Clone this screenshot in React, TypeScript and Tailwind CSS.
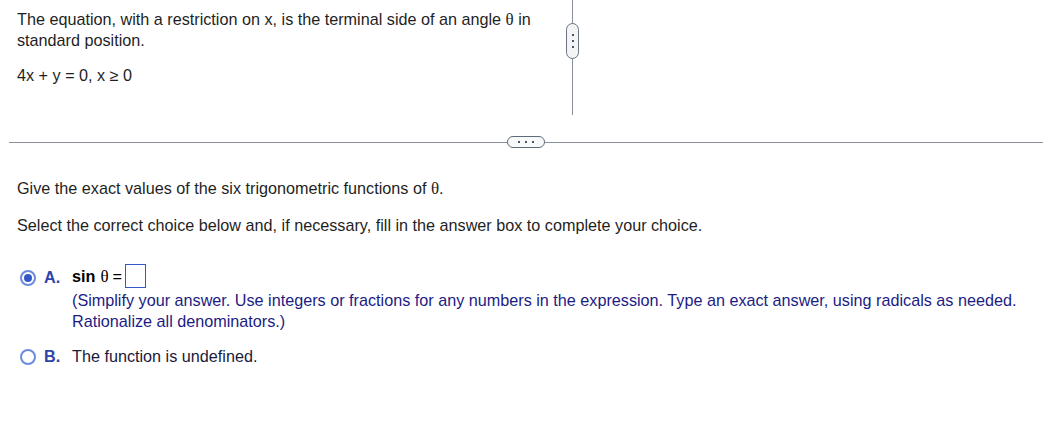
// Trig question panel: problem statement, resizable split handles, choice list

function Dots({ className }: { className: string }) {
  return (
    <div className={className}>
      <span className="block h-[2px] w-[2px] bg-[#4b5563]" />
      <span className="block h-[2px] w-[2px] bg-[#4b5563]" />
      <span className="block h-[2px] w-[2px] bg-[#4b5563]" />
    </div>
  );
}

function Theta() {
  return <span className="font-['Liberation_Serif',serif] text-[17px] leading-none">θ</span>;
}

function Radio({ checked }: { checked: boolean }) {
  return (
    <span className="flex h-[16px] w-[16px] shrink-0 items-center justify-center rounded-full border-[2px] border-[#6b8be0] bg-white">
      {checked && <span className="block h-[8px] w-[8px] rounded-full bg-[#3558c8]" />}
    </span>
  );
}

export default function App() {
  return (
    <div className="h-[436px] w-[1043px] bg-white font-['Liberation_Sans',Arial,sans-serif] text-[16.2px] leading-[21px] text-[#1f1f1f]">
      {/* Top: problem statement + vertical splitter */}
      <div className="flex h-[115px]">
        <div className="w-[572px] pl-[17px] pt-[9px]">
          <p className="w-[530px]">
            The equation, with a restriction on x, is the terminal side of an angle <Theta /> in standard
            position.
          </p>
          <p className="mt-[14px]">4x + y = 0, x ≥ 0</p>
        </div>
        <div className="relative w-px bg-[#8a8f99]">
          <div className="absolute left-[-6px] top-[23px] h-[36px] w-[13px] rounded-full border border-[#6b7280] bg-[#f3f4f6]">
            <Dots className="flex h-full flex-col items-center justify-center gap-[4px]" />
          </div>
        </div>
      </div>

      {/* Horizontal splitter */}
      <div className="mt-[21px] flex items-center pl-[9px]">
        <div className="h-px flex-1 bg-[#8a8f99]" />
        <div className="h-[12px] w-[38px] rounded-full border border-[#5f6b7a] bg-[#f8f9fb]">
          <Dots className="flex h-full items-center justify-center gap-[5px]" />
        </div>
        <div className="h-px flex-1 bg-[#8a8f99]" />
      </div>

      {/* Question */}
      <div className="pl-[17px]">
        <p className="mt-[30px]">
          Give the exact values of the six trigonometric functions of <Theta />.
        </p>
        <p className="mt-[16px]">
          Select the correct choice below and, if necessary, fill in the answer box to complete your choice.
        </p>

        <div className="mt-[28px] flex flex-col">
          <div className="flex items-start">
            <div className="mt-[3px] flex w-[55px] items-center gap-[8px] pl-[3px]">
              <Radio checked />
              <span className="font-bold text-[#2f44a8]">A.</span>
            </div>
            <div>
              <div className="flex items-center">
                <span className="font-bold text-black">sin</span>
                <span className="ml-[5px] text-black">
                  <Theta />
                </span>
                <span className="ml-[4px] text-black">=</span>
                <span className="ml-[3px] inline-block h-[24px] w-[21px] border border-[#3558c8] bg-white" />
              </div>
              <p className="mt-[2px] w-[960px] text-[#1c1c84]">
                (Simplify your answer. Use integers or fractions for any numbers in the expression. Type an exact
                answer, using radicals as needed. Rationalize all denominators.)
              </p>
            </div>
          </div>

          <div className="mt-[14px] flex items-center">
            <div className="flex w-[55px] items-center gap-[8px] pl-[3px]">
              <Radio checked={false} />
              <span className="font-bold text-[#2f44a8]">B.</span>
            </div>
            <span className="text-[#1a1a3a]">The function is undefined.</span>
          </div>
        </div>
      </div>
    </div>
  );
}
